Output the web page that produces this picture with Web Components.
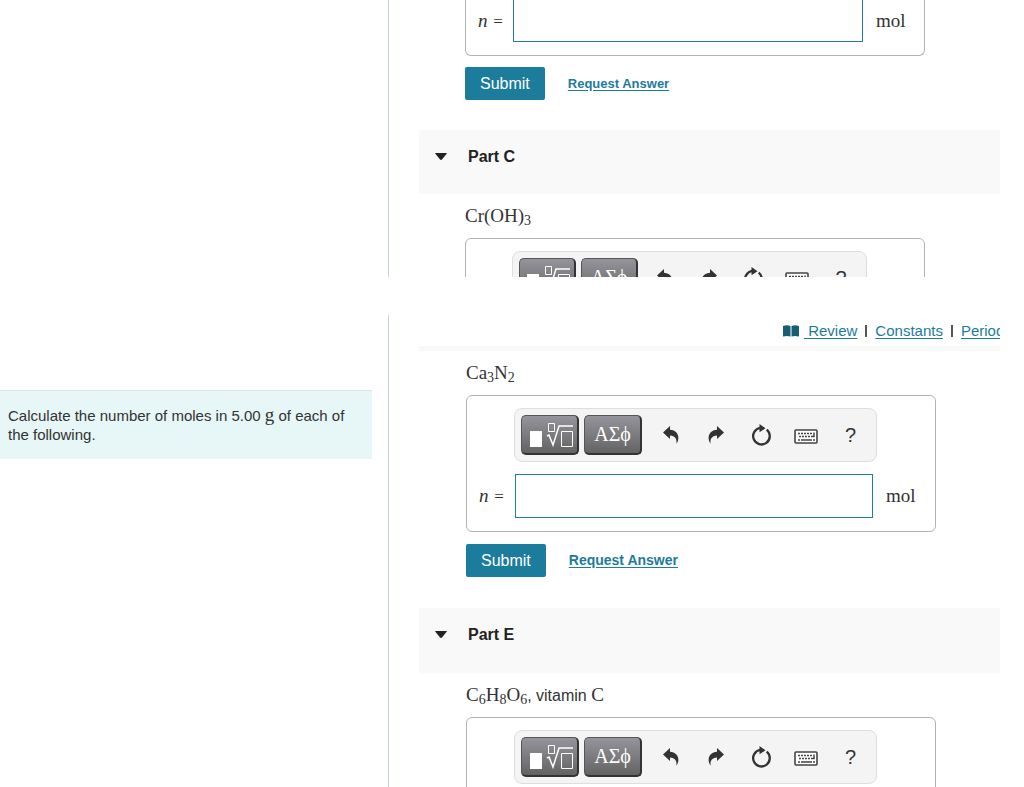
<!DOCTYPE html>
<html lang="en">
<head>
<meta charset="utf-8">
<meta name="viewport" content="width=device-width, initial-scale=1">
<title>Moles assignment</title>
<style>
  body { margin: 0; background: #fff; color: #333; font: 15px/19px "Liberation Sans", Arial, sans-serif; }
  .page { display: flex; flex-direction: column; gap: 38px; height: 100vh; overflow: hidden; padding-right: 24px; }
  .upper { flex: none; --inset: 46px; --box-end: 75px; --field-start: 47px; --unit: 61px; --key: 57px; --tool: 44px; --tool-gap: 5px; --head: 64px; --link: 13px; --head-gap: 30px; --submit-gap: 11px; }
  .lower { flex: 1 0 auto; --inset: 47px; --box-end: 64px; --field-start: 48px; --unit: 62px; --key: 58px; --tool: 45px; --tool-gap: 6px; --head: 65px; --link: 14px; --head-gap: 31px; --submit-gap: 12px; }
</style>
</head>
<body>
<main class="page">
  <problem-panel class="upper">
    <answer-box tail></answer-box>
    <submit-row></submit-row>
    <part-header>Part C</part-header>
    <chem-formula>Cr(OH)<sub>3</sub></chem-formula>
    <answer-box peek><math-toolbar></math-toolbar></answer-box>
  </problem-panel>
  <problem-panel class="lower">
    <prompt-card slot="side">Calculate the number of moles in 5.00 <span>g</span> of each of the following.</prompt-card>
    <resource-links></resource-links>
    <chem-formula>Ca<sub>3</sub>N<sub>2</sub></chem-formula>
    <answer-box><math-toolbar></math-toolbar></answer-box>
    <submit-row></submit-row>
    <part-header>Part E</part-header>
    <chem-formula>C<sub>6</sub>H<sub>8</sub>O<sub>6</sub><span>, vitamin </span>C</chem-formula>
    <answer-box><math-toolbar></math-toolbar></answer-box>
  </problem-panel>
</main>
<script>
  const define = (name, html, setup) => {
    const template = document.createElement('template');
    template.innerHTML = html;
    customElements.define(name, class extends HTMLElement {
      constructor() {
        super();
        this.attachShadow({ mode: 'open' }).append(template.content.cloneNode(true));
      }
      connectedCallback() { if (setup) setup(this); }
    });
  };

  define('problem-panel', `
    <style>
      :host { display: grid; grid-template-columns: minmax(0, 388fr) minmax(0, 612fr); }
      aside { padding: 75px 16px 0 0; }
      section { border-left: 1px solid #c3d1e2; padding-left: 30px; min-width: 0; }
    </style>
    <aside><slot name="side"></slot></aside>
    <section><slot></slot></section>`);

  define('prompt-card', `
    <style>
      :host { display: block; background: #e7f6f6; border-top: 1px solid #dde5e5; padding: 15px 8px; }
      ::slotted(span) { font-family: "Liberation Serif", serif; font-size: 19px; line-height: 16px; }
    </style>
    <slot></slot>`);

  define('resource-links', `
    <style>
      :host { display: block; border-bottom: 5px solid #f9f9f9; }
      nav { display: flex; align-items: center; width: 217px; height: 31px; margin-left: auto; overflow: hidden; white-space: nowrap; }
      svg { flex: none; width: 16px; height: 12px; margin-right: 5px; }
      a { color: #1c7c9b; text-underline-offset: 2px; }
      i { flex: none; width: 2px; height: 12px; background: #555; margin: 0 8px; }
    </style>
    <nav aria-label="Resources">
      <svg viewBox="0 0 16 12" aria-hidden="true"><path d="M0 1Q4-.5 7.500 1V11.500Q4 10.500 0 11.500zM8.500 1Q12-.5 16 1V11.500Q12 10.500 8.500 11.500z" fill="#155f72"/></svg>
      <a href="#review">&nbsp;Review</a><i></i><a href="#constants">Constants</a><i></i><a href="#periodic">Periodic Table</a>
    </nav>`);

  define('part-header', `
    <style>
      :host { display: block; box-sizing: border-box; height: var(--head); margin-top: var(--head-gap); background: #f9f9f9; }
      h2 { display: flex; align-items: center; margin: 0; padding: 17px 0 0 16px; font-size: 16px; line-height: 20px; color: #222; }
      svg { width: 12px; height: 7px; margin: 0 21px 2px 0; }
    </style>
    <h2><svg viewBox="0 0 12 7" aria-hidden="true"><path d="M.5 0h11q.5 0 .3.600L7 6.500q-1 .8-2 0L.2.600Q0 0 .5 0z" fill="#222"/></svg><slot></slot></h2>`);

  define('chem-formula', `
    <style>
      :host { display: block; height: 44px; padding-left: var(--inset); font: 19px/44px "Liberation Serif", serif; white-space: nowrap; }
      ::slotted(sub) { font-size: 14px; line-height: 1px; vertical-align: -3px; }
      ::slotted(span) { font: 16px "Liberation Sans", Arial, sans-serif; }
    </style>
    <slot></slot>`);

  let fieldCount = 0;
  define('answer-box', `
    <style>
      :host { display: block; margin: 0 var(--box-end) 0 var(--inset); }
      .box { border: 1px solid #b2b2b2; border-radius: 6px; padding: 12px 0 13px; }
      ::slotted(math-toolbar) { margin: 0 0 12px calc(var(--field-start) - 1px); }
      .row { display: flex; align-items: center; font: 19px/22px "Liberation Serif", serif; }
      label { box-sizing: border-box; flex: 0 0 var(--field-start); padding-left: 12px; }
      label span { font-size: 17px; margin-left: 1px; }
      input { box-sizing: border-box; flex: 1; min-width: 0; height: 44px; padding: 0 10px; border: 1px solid #1f7f9d; border-radius: 0; background: #fff; font: inherit; outline: 0; }
      .unit { box-sizing: border-box; flex: 0 0 var(--unit); padding-left: 13px; }
      :host([tail]) .box { border-top: 0; border-radius: 0 0 6px 6px; padding-top: 0; }
      :host([tail]) input { border-top: 0; height: 42px; }
      :host([peek]) { max-height: 39px; overflow: hidden; }
      :host([peek]) .row { display: none; }
    </style>
    <div class="box">
      <slot></slot>
      <div class="row"><label><em>n</em> <span>=</span></label><input type="text"><span class="unit">mol</span></div>
    </div>`, el => {
      const id = 'amount-' + (++fieldCount);
      el.shadowRoot.querySelector('input').id = id;
      el.shadowRoot.querySelector('label').htmlFor = id;
    });

  define('submit-row', `
    <style>
      :host { display: flex; align-items: center; gap: 23px; margin: var(--submit-gap) 0 0 var(--inset); }
      button { height: 33px; padding: 0 15px; border: 0; border-radius: 2px; background: #1c7c9b; color: #fff; font: 16px "Liberation Sans", Arial, sans-serif; }
      a { color: #1c7c9b; font-weight: bold; font-size: var(--link); text-underline-offset: 2px; padding-bottom: 1px; }
    </style>
    <button type="button">Submit</button><a href="#answer">Request Answer</a>`);

  define('math-toolbar', `
    <style>
      :host { box-sizing: border-box; display: flex; align-items: center; width: fit-content; height: 54px; padding: 0 3px 0 6px; border: 1px solid #dedede; border-radius: 8px; background: #f4f4f4; }
      button { display: flex; align-items: center; justify-content: center; padding: 0; border: 0; background: none; color: #333; }
      .key { box-sizing: border-box; width: var(--key); height: 40px; border: 1px solid #555; border-right: 2px solid #333; border-bottom: 2px solid #333; border-radius: 5px; background: linear-gradient(#96949c, #636363); color: #fff; font: 20px/24px "Liberation Serif", serif; padding-bottom: 2px; }
      .key svg { margin: 3px 0 0 2px; }
      .key + .key { margin: 0 var(--tool-gap) 0 5px; }
      .tool { width: var(--tool); height: 40px; font: 20px "Liberation Sans", Arial, sans-serif; }
    </style>
    <button class="key" type="button" aria-label="Templates">
      <svg width="44" height="26" viewBox="0 0 44 26" fill="none" stroke="#fff"><path d="M1 9h12v16H1z" fill="#fff" stroke="none"/><path d="M19.500 1.500h6v8h-6z"/><path d="M18 14l2-1 4 10 6-19h14" stroke-width="1.500"/><path d="M32.500 9.500h11v15h-11z"/></svg>
    </button>
    <button class="key" type="button" aria-label="Symbols">ΑΣϕ</button>
    <button class="tool" type="button" aria-label="Undo"><svg width="18" height="18" viewBox="0 0 18 18"><path d="M1 6.500L8 0v3.800c5.500.3 9 4.200 8.300 9.200-.2 2-1 3.500-2 4.700 1-5-1.300-7.700-6.300-8.200V13z" fill="#333"/></svg></button>
    <button class="tool" type="button" aria-label="Redo"><svg width="18" height="18" viewBox="0 0 18 18"><path d="M17 6.500L10 0v3.800C4.500 4.100 1 8 1.700 13c.2 2 1 3.500 2 4.700-1-5 1.300-7.700 6.300-8.200V13z" fill="#333"/></svg></button>
    <button class="tool" type="button" aria-label="Reset"><svg width="22" height="22" viewBox="0 0 22 22"><path d="M16.700 5.700a8.300 8.300 0 1 1-6.200-1.800" fill="none" stroke="#333" stroke-width="2.300"/><path d="M9.500 0l6 4.300-6 4z" fill="#333"/></svg></button>
    <button class="tool" type="button" aria-label="Keyboard"><svg width="24" height="20" viewBox="0 0 24 20"><rect x="1" y="5" width="22" height="13" rx="1" fill="#fff" stroke="#444" stroke-width="1.600"/><path d="M4 8.500h15M5 11.500h13M4 15h2M19 15h2" stroke="#444" stroke-width="1.500" stroke-dasharray="2 1"/><path d="M7 15h11M20 7.500v4h-2" fill="none" stroke="#444" stroke-width="1.500"/></svg></button>
    <button class="tool" type="button" aria-label="Help">?</button>`);
</script>
</body>
</html>
